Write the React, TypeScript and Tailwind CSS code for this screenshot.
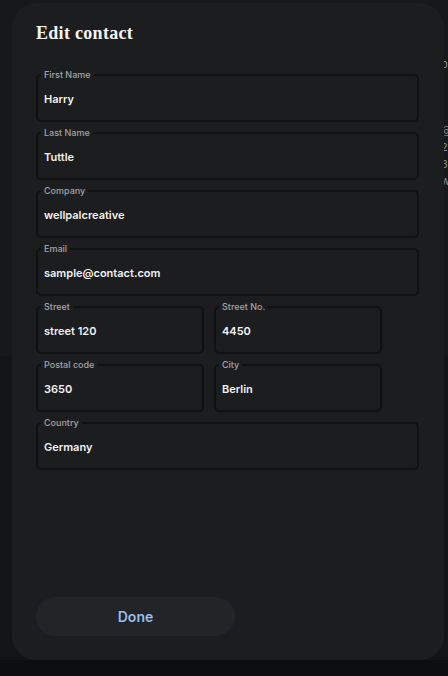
import React, { useState } from "react";

type Field = {
  key: string;
  label: string;
  half?: boolean;
};

const fields: Field[] = [
  { key: "firstName", label: "First Name" },
  { key: "lastName", label: "Last Name" },
  { key: "company", label: "Company" },
  { key: "email", label: "Email" },
  { key: "street", label: "Street", half: true },
  { key: "streetNo", label: "Street No.", half: true },
  { key: "postal", label: "Postal code", half: true },
  { key: "city", label: "City", half: true },
  { key: "country", label: "Country" },
];

const initial: Record<string, string> = {
  firstName: "Harry",
  lastName: "Tuttle",
  company: "wellpalcreative",
  email: "sample@contact.com",
  street: "street 120",
  streetNo: "4450",
  postal: "3650",
  city: "Berlin",
  country: "Germany",
};

function OutlinedInput({
  label,
  value,
  half,
  onChange,
}: {
  label: string;
  value: string;
  half?: boolean;
  onChange: (v: string) => void;
}) {
  return (
    <fieldset
      className={`h-[53px] rounded-[5px] border-2 border-[#101113] pl-[6px] pr-[6px] ${
        half ? "w-[168px]" : "col-span-2 w-[383px]"
      }`}
    >
      <legend className="ml-[-3px] px-[3px] text-[9px] leading-[12px] font-medium text-[#a3a4a7]">
        {label}
      </legend>
      <input
        value={value}
        onChange={(e) => onChange(e.target.value)}
        className="mt-[10px] block w-full bg-transparent text-[11px] leading-[16px] font-semibold text-[#f1f1f2] outline-none"
      />
    </fieldset>
  );
}

export default function App() {
  const [values, setValues] = useState(initial);

  return (
    <div
      className="relative h-[676px] w-[448px] overflow-hidden bg-[#0d0e10]"
      style={{ fontFamily: "Inter, 'Noto Sans', sans-serif" }}
    >
      {/* page behind the dialog */}
      <div className="flex h-[660px] flex-col">
        <div className="h-[356px] bg-[#17181a]">
          <div className="ml-[441px] flex flex-col pt-[56px] text-[11px] leading-[17px] text-[#8a8b8e]">
            <span>p</span>
            <span className="mt-[49px]">@</span>
            <span>2</span>
            <span>3</span>
            <span>w</span>
          </div>
        </div>
        <div className="flex-1 bg-[#131416]" />
      </div>

      {/* dialog */}
      <div className="absolute left-[12px] top-[3px] flex h-[657px] w-[432px] flex-col rounded-[24px] bg-[#1c1d1f] px-[24px] pt-[18px] pb-[24px]">
        <h2
          className="text-[18px] leading-[24px] font-bold tracking-[0.3px] text-[#f4f4f4]"
          style={{ fontFamily: "'Liberation Serif', 'DejaVu Serif', serif" }}
        >
          Edit contact
        </h2>

        <div className="mt-[24px] grid grid-cols-[168px_168px] gap-x-[10px] gap-y-[5px]">
          {fields.map((f) => (
            <OutlinedInput
              key={f.key}
              label={f.label}
              half={f.half}
              value={values[f.key]}
              onChange={(v) => setValues({ ...values, [f.key]: v })}
            />
          ))}
        </div>

        <button className="mt-auto h-[39px] w-[199px] rounded-full bg-[#222428] text-[14px] font-semibold text-[#9dbcea]">
          Done
        </button>
      </div>
    </div>
  );
}
